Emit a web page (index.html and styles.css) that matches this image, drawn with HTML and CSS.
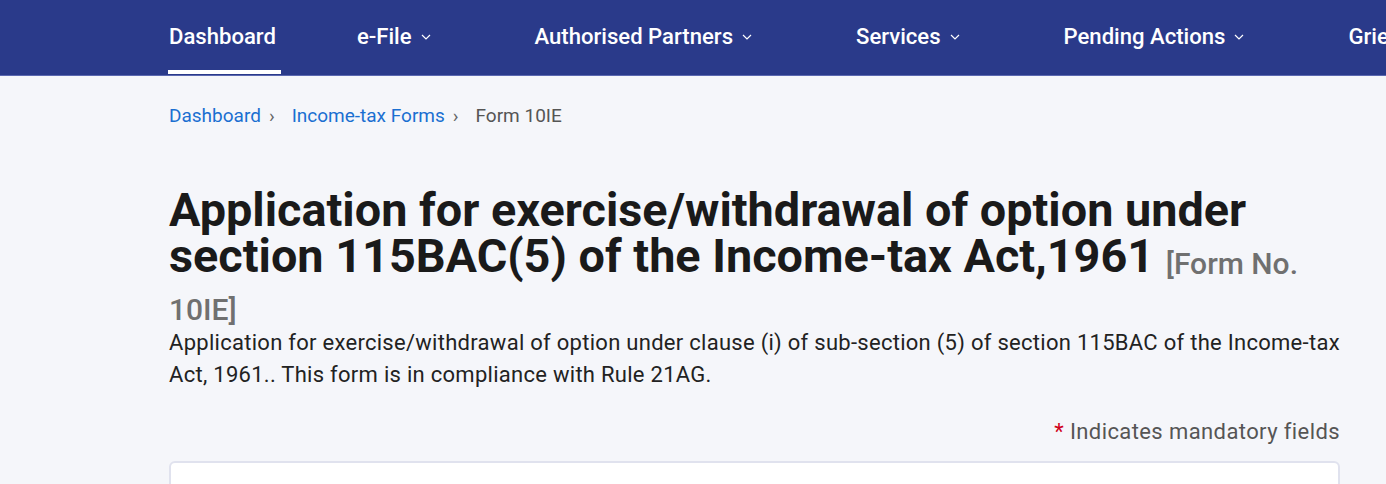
FILE: index.html
```html
<!DOCTYPE html>
<html lang="en">
<head>
<meta charset="utf-8">
<title>Form 10IE</title>
<link rel="stylesheet" href="styles.css">
</head>
<body>
<header class="topnav">
  <nav class="nav-items">
    <a class="nav-item active">Dashboard</a>
    <a class="nav-item has-menu">e-File<span class="chev"><svg viewBox="0 0 10 6" width="10" height="6"><path d="M1 1l4 4 4-4" fill="none" stroke="#fff" stroke-width="1.2"/></svg></span></a>
    <a class="nav-item has-menu">Authorised Partners<span class="chev"><svg viewBox="0 0 10 6" width="10" height="6"><path d="M1 1l4 4 4-4" fill="none" stroke="#fff" stroke-width="1.2"/></svg></span></a>
    <a class="nav-item has-menu">Services<span class="chev"><svg viewBox="0 0 10 6" width="10" height="6"><path d="M1 1l4 4 4-4" fill="none" stroke="#fff" stroke-width="1.2"/></svg></span></a>
    <a class="nav-item has-menu">Pending Actions<span class="chev"><svg viewBox="0 0 10 6" width="10" height="6"><path d="M1 1l4 4 4-4" fill="none" stroke="#fff" stroke-width="1.2"/></svg></span></a>
    <a class="nav-item">Grievances</a>
  </nav>
</header>
<main class="content">
  <div class="breadcrumb">
    <a class="crumb-link">Dashboard</a><span class="sep">›</span>
    <a class="crumb-link">Income-tax Forms</a><span class="sep">›</span>
    <span class="crumb-current">Form 10IE</span>
  </div>
  <h1 class="title">Application for exercise/withdrawal of option under section 115BAC(5) of the Income-tax Act,1961 <span class="form-no">[Form No. 10IE]</span></h1>
  <p class="desc">Application for exercise/withdrawal of option under clause (i) of sub-section (5) of section 115BAC of the Income-tax Act, 1961.. This form is in compliance with Rule 21AG.</p>
  <div class="mandatory"><span class="star">*</span> Indicates mandatory fields</div>
  <div class="card"></div>
</main>
</body>
</html>
```
FILE: styles.css
```css
* { box-sizing: border-box; }
html, body { margin: 0; padding: 0; }
body {
  background: #f5f6fa;
  font-family: Roboto, "Liberation Sans", Arial, sans-serif;
  color: #1a1a1a;
  width: 1386px;
  overflow: hidden;
}
.topnav {
  background: #2a3a8a;
  height: 76px;
  border-bottom: 1px solid #5b68b0;
  overflow: hidden;
}
.nav-items {
  display: flex;
  gap: 81px;
  padding-left: 169px;
  height: 75px;
  white-space: nowrap;
}
.nav-item {
  color: #fff;
  font-size: 22.1px;
  font-weight: 500;
  display: flex;
  align-items: center;
  height: 75px;
  padding-bottom: 3px;
  position: relative;
  flex-shrink: 0;
}
.nav-item.active::after {
  content: "";
  position: absolute;
  left: -1px;
  right: -5px;
  bottom: 1px;
  height: 4px;
  background: #fff;
}
.chev {
  display: inline-flex;
  margin-left: 9px;
  margin-right: 23px;
  margin-top: 2px;
}
.content {
  padding: 0 46px 0 169px;
}
.breadcrumb {
  margin-top: 28px;
  font-size: 19px;
  line-height: 24px;
  display: flex;
  align-items: center;
}
.crumb-link { color: #1a6fd1; }
.sep { color: #666; margin: 0 17px 0 8px; }
.crumb-current { color: #555; }
.title {
  margin: 59px 0 0;
  font-size: 46.8px;
  line-height: 46px;
  font-weight: 700;
  color: #1a1a1a;
}
.form-no {
  font-size: 30px;
  line-height: 1;
  font-weight: 500;
  color: #707070;
  vertical-align: -2px;
}
.desc {
  margin: 2px 0 0;
  font-size: 22px;
  letter-spacing: 0.28px;
  line-height: 32px;
  color: #222;
}
.mandatory {
  margin-top: 28px;
  text-align: right;
  font-size: 22px;
  letter-spacing: 0.4px;
  line-height: 26px;
  color: #555;
}
.star { color: #d0021b; }
.card {
  margin-top: 16px;
  height: 60px;
  background: #fff;
  border: 2px solid #e0e2ee;
  border-radius: 6px;
}
```
